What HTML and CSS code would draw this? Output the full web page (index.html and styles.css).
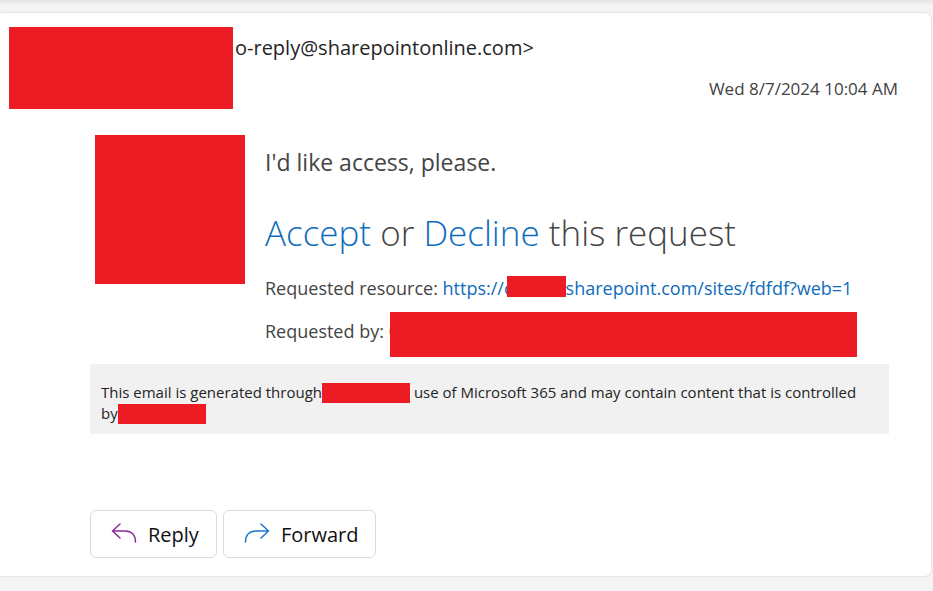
FILE: index.html
```html
<!DOCTYPE html>
<html lang="en">
<head>
<meta charset="utf-8">
<meta name="viewport" content="width=device-width, initial-scale=1">
<title>Access request</title>
<link rel="stylesheet" href="styles.css">
</head>
<body>
<main class="message">
  <header class="message-header">
    <span class="redacted redacted-sender"></span>
    <div class="message-meta">
      <div class="sender">o-reply@sharepointonline.com&gt;</div>
      <time class="sent" datetime="2024-08-07T10:04">Wed 8/7/2024 10:04 AM</time>
    </div>
  </header>
  <div class="message-body">
    <section class="request">
      <span class="redacted redacted-photo"></span>
      <div class="request-text">
        <p class="request-note">I'd like access, please.</p>
        <h1 class="request-title"><a href="#">Accept</a> or <a href="#">Decline</a> this request</h1>
        <p class="detail">Requested resource: <a class="resource" href="#">https://c<span class="redacted redacted-tenant"></span>sharepoint.com/sites/fdfdf?web=1</a></p>
        <div class="requester"><p class="detail">Requested by: C</p><span class="redacted redacted-requester"></span></div>
      </div>
    </section>
    <p class="disclaimer">This email is generated through<span class="redacted redacted-company"></span> use of Microsoft 365 and may contain content that is controlled <span class="owner">by<span class="redacted redacted-owner"></span></span></p>
    <div class="actions">
      <button class="action reply" type="button">
        <svg class="icon" viewBox="0 0 26 20" aria-hidden="true"><path d="M9 1 1.500 8l7.500 7M1.500 8H14c6.500 0 10.500 4 10.500 11"/></svg>
        Reply
      </button>
      <button class="action forward" type="button">
        <svg class="icon" viewBox="0 0 26 20" aria-hidden="true"><path d="M17 1l7.500 7-7.500 7M24.500 8H12C5.500 8 1.500 12 1.500 19"/></svg>
        Forward
      </button>
    </div>
  </div>
</main>
</body>
</html>
```
FILE: styles.css
```css
* {
  box-sizing: border-box;
}

body {
  margin: 0;
  padding: 13px 2px 14px 0;
  min-height: 100vh;
  background: #f4f4f4 linear-gradient(#e4e4e4, #f3f3f3) top / 100% 5px no-repeat;
  color: #242424;
  font-family: "Segoe UI", "Open Sans", "Noto Sans", sans-serif;
}

p,
h1 {
  margin: 0;
}

a {
  color: #0f6cbd;
  text-decoration: none;
}

.message {
  padding: 14px 0 18px;
  background: #fff;
  border-radius: 0 6px 6px 0;
  box-shadow: 0 0 2px rgba(0, 0, 0, 0.2);
}

.message-header {
  display: flex;
  gap: 2px;
  padding: 0 33px 0 9px;
}

.message-meta {
  display: flex;
  flex: 1;
  flex-direction: column;
  gap: 13px;
  padding-top: 7px;
}

.sender {
  font-size: 20px;
  line-height: 28px;
}

.sent {
  align-self: flex-end;
  color: #424242;
  font-size: 17px;
  line-height: 28px;
}

.redacted {
  flex: none;
  background: #ed1c24;
}

.redacted-sender {
  width: 224px;
  height: 82px;
}

.message-body {
  padding: 26px 42px 0 90px;
}

.request {
  display: flex;
  gap: 20px;
  padding-left: 5px;
  color: #444;
}

.redacted-photo {
  width: 150px;
  height: 149px;
}

.request-text {
  flex: 1;
  min-width: 0;
  padding-top: 11px;
}

.request-note {
  font-size: 23px;
  line-height: 32px;
}

.request-title {
  margin: 31px 0 19px;
  font-size: 35px;
  font-weight: 300;
  line-height: 48px;
}

.detail {
  font-size: 18px;
  line-height: 24px;
  white-space: nowrap;
}

.redacted-tenant,
.redacted-company,
.redacted-owner {
  display: inline-block;
  vertical-align: top;
}

.redacted-tenant {
  width: 59px;
  height: 21px;
  margin-left: -6px;
}

.requester {
  display: flex;
  align-items: flex-start;
  margin-top: 12px;
}

.requester .detail {
  padding-top: 7px;
}

.redacted-requester {
  width: 467px;
  height: 45px;
  margin-left: -10px;
}

.disclaimer {
  margin-top: 7px;
  padding: 18px 20px 10px 11px;
  background: #f1f1f1;
  font-size: 15px;
  line-height: 21px;
}

.owner {
  white-space: nowrap;
}

.redacted-company,
.redacted-owner {
  width: 88px;
  height: 20px;
  margin-top: 1px;
}

.actions {
  display: flex;
  gap: 6px;
  margin-top: 76px;
}

.action {
  display: flex;
  align-items: center;
  gap: 11px;
  height: 48px;
  padding: 1px 17px 0 20px;
  background: #fff;
  border: 1px solid #dcdcdc;
  border-radius: 6px;
  color: #111;
  font: inherit;
  font-size: 20px;
}

.icon {
  width: 26px;
  height: 20px;
  margin-bottom: 3px;
  fill: none;
  stroke: currentColor;
  stroke-width: 1.5;
  stroke-linecap: round;
  stroke-linejoin: round;
}

.reply .icon {
  color: #8a2a9b;
}

.forward .icon {
  color: #1a77cf;
}
```
